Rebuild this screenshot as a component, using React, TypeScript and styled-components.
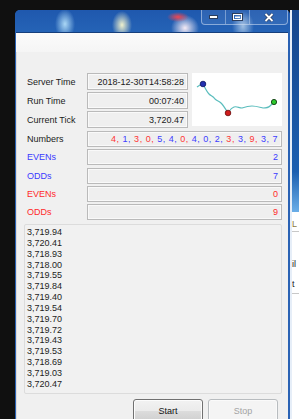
import styled, { createGlobalStyle } from "styled-components";

const Global = createGlobalStyle`
  html, body {
    margin: 0;
    padding: 0;
    background: #101010;
    overflow: hidden;
  }
  * { box-sizing: border-box; }
`;

const Screen = styled.div`
  width: 299px;
  height: 419px;
  display: flex;
  flex-direction: column;
  background: #101010;
  overflow: hidden;
  font-family: "Liberation Sans", Arial, sans-serif;
  font-size: 9px;
  color: #1b1b1b;
`;

const TopGap = styled.div`
  height: 10px;
  flex: none;
`;

const Desk = styled.div`
  flex: 1;
  display: flex;
  min-height: 0;
`;

const LeftGap = styled.div`
  width: 15px;
  flex: none;
`;

const Window = styled.div`
  width: 275px;
  flex: none;
  display: flex;
  flex-direction: column;
  background: #2a62b4;
  padding: 0 2px 0 1px;
  border-radius: 5px 5px 0 0;
`;

const TitleBar = styled.div`
  height: 22px;
  flex: none;
  display: flex;
  justify-content: flex-end;
  align-items: flex-start;
  margin: 0 -2px 0 -1px;
  border-radius: 5px 5px 0 0;
  background:
    radial-gradient(ellipse 10px 15px at 50px 14px, rgba(170, 215, 245, 1), rgba(170, 215, 245, 0) 100%),
    radial-gradient(ellipse 10px 14px at 107px 15px, rgba(240, 242, 205, 1), rgba(240, 242, 205, 0) 100%),
    radial-gradient(ellipse 11px 5px at 163px 7px, rgba(240, 70, 80, 1), rgba(240, 70, 80, 0) 100%),
    radial-gradient(ellipse 14px 13px at 170px 18px, rgba(245, 235, 245, 1), rgba(245, 235, 245, 0) 100%),
    radial-gradient(ellipse 11px 15px at 228px 16px, rgba(210, 230, 245, 0.7), rgba(210, 230, 245, 0) 100%),
    linear-gradient(#1f58ae, #2563b6);
`;

const Caption = styled.div`
  display: flex;
  height: 15px;
  margin-right: 2px;
  border: 1px solid rgba(210, 225, 245, 0.55);
  border-top: none;
  border-radius: 0 0 4px 4px;
  background: rgba(255, 255, 255, 0.07);
  overflow: hidden;
`;

const CapButton = styled.div<{ $w: number }>`
  width: ${p => p.$w}px;
  height: 100%;
  display: flex;
  align-items: center;
  justify-content: center;
  & + & {
    border-left: 1px solid rgba(210, 225, 245, 0.45);
  }
`;

const Client = styled.div`
  flex: 1;
  display: flex;
  flex-direction: column;
  background: #f0f0f0;
  min-height: 0;
`;

const MenuStrip = styled.div`
  height: 20px;
  flex: none;
  background: linear-gradient(#fbfbfb, #f5f5f5);
  border-top: 1px solid #163f7c;
`;

const Body = styled.div`
  flex: 1;
  display: flex;
  flex-direction: column;
  padding: 21px 6px 0 10px;
  border-left: 1px solid #dadada;
`;

const TopGrid = styled.div`
  display: grid;
  grid-template-columns: 56px 101px 90px;
  grid-template-rows: repeat(3, 17px);
  column-gap: 4px;
  row-gap: 2px;
`;

const Label = styled.div<{ $color?: string }>`
  display: flex;
  align-items: center;
  color: ${p => p.$color || "#1b1b1b"};
  white-space: nowrap;
`;

const ValueBox = styled.div<{ $color?: string }>`
  display: flex;
  align-items: center;
  justify-content: flex-end;
  padding-right: 3px;
  background: #efefef;
  border: 1px solid #bababa;
  box-shadow: inset 0 0 0 1px #f9f9f9;
  color: ${p => p.$color || "#1b1b1b"};
  white-space: pre;
  overflow: hidden;
`;

const Chart = styled.div`
  grid-column: 3;
  grid-row: 1 / span 3;
  background: #ffffff;
  height: 53px;
`;

const Rows = styled.div`
  display: grid;
  grid-template-columns: 60px 195px;
  grid-auto-rows: 16px;
  row-gap: 2.25px;
  margin-top: 3px;
`;

const NumberList = styled.span`
  letter-spacing: 0.5px;
  white-space: pre;
`;

const Num = styled.span<{ $color: string }>`
  color: ${p => p.$color};
`;

const LogBox = styled.div`
  margin: 4px 0 0 -3px;
  width: 258px;
  height: 170px;
  border: 1px solid #dcdcdc;
  border-radius: 2px;
  background: #f1f1f1;
  padding: 2px 0 0 2px;
  line-height: 10.85px;
  color: #1d1d1d;
`;

const ButtonRow = styled.div`
  display: flex;
  justify-content: flex-end;
  gap: 5px;
  margin-top: 5px;
  padding-right: 4px;
`;

const Button = styled.div<{ $disabled?: boolean }>`
  width: 70px;
  height: 23px;
  flex: none;
  display: flex;
  align-items: center;
  justify-content: center;
  border-radius: 3px;
  border: 1px solid ${p => (p.$disabled ? "#b8bcbf" : "#707070")};
  background: ${p =>
    p.$disabled
      ? "#f4f4f4"
      : "linear-gradient(#f2f2f2 0%, #ebebeb 50%, #dddddd 51%, #cfcfcf 100%)"};
  color: ${p => (p.$disabled ? "#a3a3a3" : "#111")};
  box-shadow: inset 0 0 0 1px ${p => (p.$disabled ? "#fafafa" : "#fcfcfc")};
`;

const RightEdge = styled.div`
  flex: 1;
  display: flex;
  flex-direction: column;
  border-left: 2px solid #e6eef8;
`;

const BackBlue = styled.div`
  height: 202px;
  flex: none;
  background: linear-gradient(#16468c 0%, #1c5fb0 80%, #6aaee8 100%);
`;

const BackPage = styled.div`
  flex: 1;
  background: #ffffff;
  display: flex;
  flex-direction: column;
  padding-top: 4px;
  font-size: 9px;
  color: #222;
  white-space: nowrap;
  overflow: hidden;
`;

const BackLine = styled.div<{ $rule?: boolean; $h: number; $color?: string }>`
  height: ${p => p.$h}px;
  line-height: ${p => p.$h}px;
  color: ${p => p.$color || "#222"};
  border-bottom: ${p => (p.$rule ? "1px solid #c8c8c8" : "none")};
`;

const numbers: [string, string][] = [
  ["4", "#ff3434"],
  ["1", "#3c3cff"],
  ["3", "#ff3434"],
  ["0", "#ff3434"],
  ["5", "#3c3cff"],
  ["4", "#3c3cff"],
  ["0", "#ff3434"],
  ["4", "#3c3cff"],
  ["0", "#3c3cff"],
  ["2", "#3c3cff"],
  ["3", "#ff3434"],
  ["3", "#3c3cff"],
  ["9", "#ff3434"],
  ["3", "#3c3cff"],
  ["7", "#3c3cff"],
];

const ticks = [
  "3,719.94",
  "3,720.41",
  "3,718.93",
  "3,718.00",
  "3,719.55",
  "3,719.84",
  "3,719.40",
  "3,719.54",
  "3,719.70",
  "3,719.72",
  "3,719.43",
  "3,719.53",
  "3,718.69",
  "3,719.03",
  "3,720.47",
];

const BLUE = "#3a3aff";
const RED = "#ff2a2a";

const App = () => {
  return (
    <Screen>
      <Global />
      <TopGap />
      <Desk>
        <LeftGap />
        <Window>
          <TitleBar>
            <Caption>
              <CapButton $w={23}>
                <svg width="9" height="4" viewBox="0 0 9 4">
                  <rect x="0.5" y="0.5" width="8" height="3" fill="#fff" stroke="#2b3d5c" strokeWidth="1" />
                </svg>
              </CapButton>
              <CapButton $w={24}>
                <svg width="11" height="8" viewBox="0 0 11 8">
                  <rect x="0.5" y="0.5" width="10" height="7" fill="none" stroke="#2b3d5c" />
                  <rect x="1.5" y="1.5" width="8" height="5" fill="none" stroke="#fff" />
                  <rect x="3" y="3.5" width="5" height="1.5" fill="#fff" />
                </svg>
              </CapButton>
              <CapButton $w={38}>
                <svg width="10" height="9" viewBox="0 0 10 9">
                  <path d="M1.5 1 L8.5 8 M8.5 1 L1.5 8" stroke="#2b3d5c" strokeWidth="3.2" />
                  <path d="M1.5 1 L8.5 8 M8.5 1 L1.5 8" stroke="#fff" strokeWidth="1.8" />
                </svg>
              </CapButton>
            </Caption>
          </TitleBar>
          <Client>
            <MenuStrip />
            <Body>
              <TopGrid>
                <Label>Server Time</Label>
                <ValueBox>2018-12-30T14:58:28</ValueBox>
                <Chart>
                  <svg width="90" height="53" viewBox="0 0 90 53">
                    <path
                      d="M5,14 L8,12 L11,11 C13,15 15,19 17,21 C19,23 21,23 23,26 C25,28 27,28 29,30 C31,32 33,35 36,40 C38,37 39,35 42,34 C45,33 47,35 50,35 C53,34 56,33 60,33 C64,33 67,34 71,35 C74,35 76,35 78,33 C80,31 81,30 82,29"
                      fill="none"
                      stroke="#5bbdbd"
                      strokeWidth="1.2"
                    />
                    <circle cx="11" cy="11" r="2.8" fill="#2230b0" stroke="#0c1560" strokeWidth="0.8" />
                    <circle cx="36" cy="40" r="2.8" fill="#d01c1c" stroke="#6a0a0a" strokeWidth="0.8" />
                    <circle cx="82" cy="29" r="2.6" fill="#2ecb2e" stroke="#0a3a0a" strokeWidth="0.9" />
                  </svg>
                </Chart>
                <Label>Run Time</Label>
                <ValueBox>00:07:40</ValueBox>
                <Label>Current Tick</Label>
                <ValueBox>3,720.47</ValueBox>
              </TopGrid>
              <Rows>
                <Label>Numbers</Label>
                <ValueBox>
                  <NumberList>
                    {numbers.map(([n, c], i) => (
                      <Num key={i} $color={c}>
                        {n}
                        {i < numbers.length - 1 ? ", " : ""}
                      </Num>
                    ))}
                  </NumberList>
                </ValueBox>
                <Label $color={BLUE}>EVENs</Label>
                <ValueBox $color={BLUE}>2</ValueBox>
                <Label $color={BLUE}>ODDs</Label>
                <ValueBox $color={BLUE}>7</ValueBox>
                <Label $color={RED}>EVENs</Label>
                <ValueBox $color={RED}>0</ValueBox>
                <Label $color={RED}>ODDs</Label>
                <ValueBox $color={RED}>9</ValueBox>
              </Rows>
              <LogBox>
                {ticks.map((t, i) => (
                  <div key={i}>{t}</div>
                ))}
              </LogBox>
              <ButtonRow>
                <Button>Start</Button>
                <Button $disabled>Stop</Button>
              </ButtonRow>
            </Body>
          </Client>
        </Window>
        <RightEdge>
          <BackBlue />
          <BackPage>
            <BackLine $h={16} $rule $color="#8a7a40">L</BackLine>
            <BackLine $h={22} />
            <BackLine $h={20}>il</BackLine>
            <BackLine $h={20} $rule>t</BackLine>
          </BackPage>
        </RightEdge>
      </Desk>
    </Screen>
  );
};

export default App;
